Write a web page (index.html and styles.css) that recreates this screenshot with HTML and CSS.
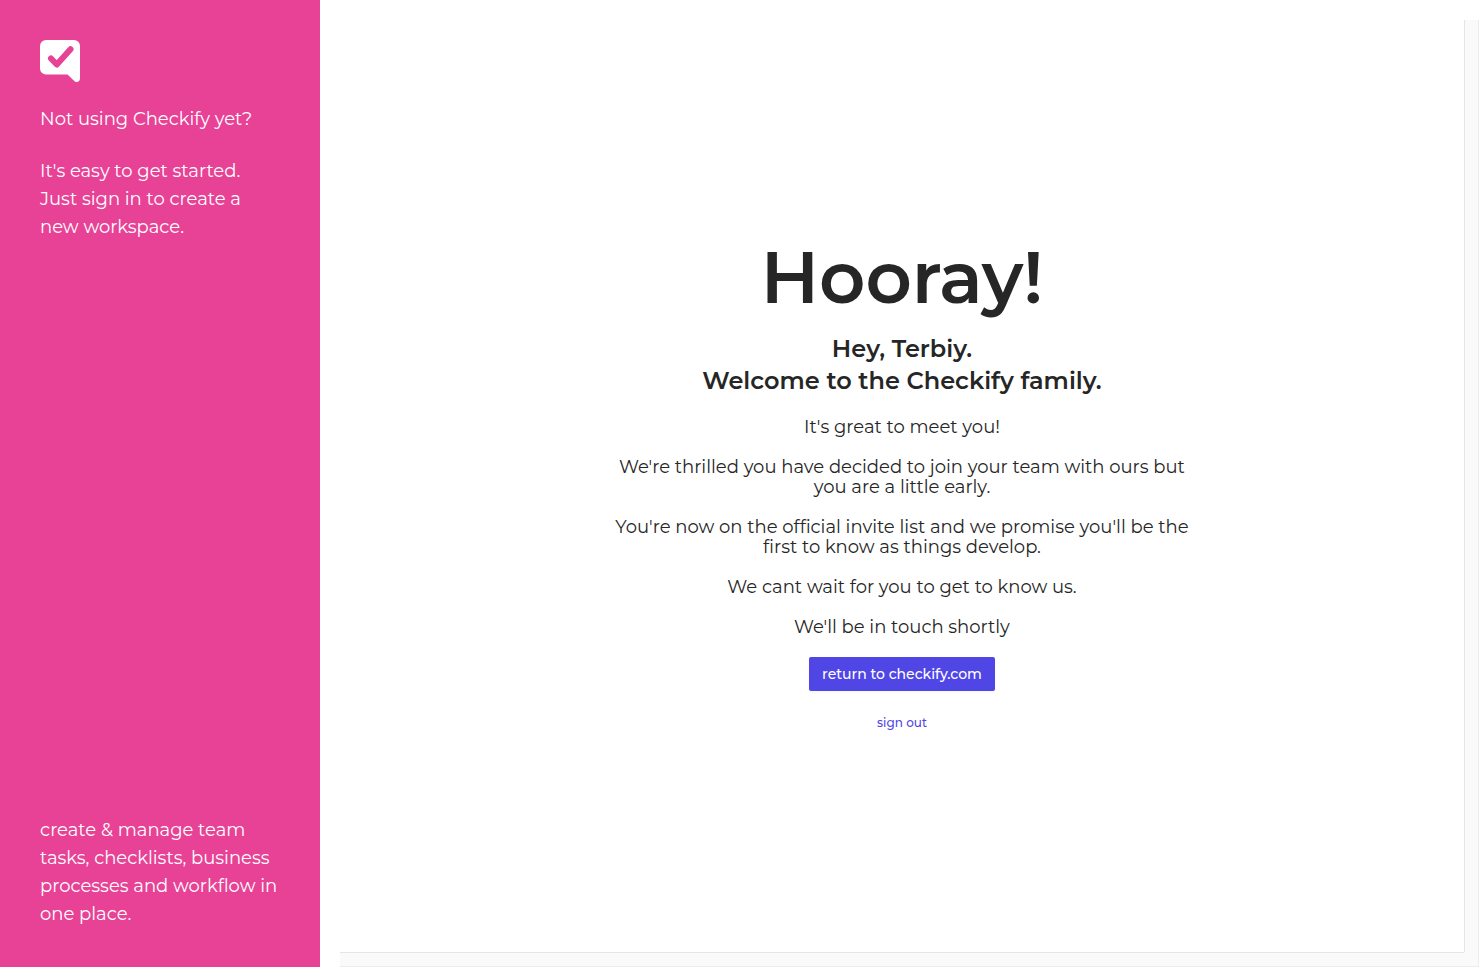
FILE: index.html
```html
<!DOCTYPE html>
<html lang="en">
  <head>
    <meta charset="UTF-8" />
    <meta name="viewport" content="width=device-width, initial-scale=1.0" />
    <title>Checkify</title>
    <link rel="stylesheet" href="styles.css">
  </head>
  <body>
    <aside class="sidebar">
      <svg class="logo" viewBox="0 0 40 42" role="img" aria-label="Checkify">
        <path fill="#fff" d="M6 0H34A6 6 0 0 1 40 6V38.500C40 41.800 36.600 43.200 34.300 41L27.500 34.500H6A6 6 0 0 1 0 28.500V6A6 6 0 0 1 6 0Z" />
        <path fill="none" stroke="#e74296" stroke-width="6" stroke-linecap="round" stroke-linejoin="round" d="M11 18.500L16.800 24.500L30.500 9.300" />
      </svg>
      <div class="intro">
        <p>Not using Checkify yet?</p>
        <p>It's easy to get started.<br>Just sign in to create a<br>new workspace.</p>
      </div>
      <p class="tagline">create &amp; manage team tasks, checklists, business processes and workflow in one place.</p>
    </aside>

    <main class="page">
      <div class="content">
        <div class="welcome">
          <h1>Hooray!</h1>
          <h2>Hey, Terbiy.<br>Welcome to the Checkify family.</h2>
          <p>It's great to meet you!</p>
          <p>We're thrilled you have decided to join your team with ours but you are a little early.</p>
          <p>You're now on the official invite list and we promise you'll be the first to know as things develop.</p>
          <p>We cant wait for you to get to know us.</p>
          <p>We'll be in touch shortly</p>
          <button type="button" class="return">return to checkify.com</button>
          <a href="#" class="sign-out">sign out</a>
        </div>
      </div>
      <div class="track track-right"></div>
      <div class="track track-bottom"></div>
      <div class="corner"></div>
    </main>
  </body>
</html>
```
FILE: styles.css
```css
* {
  box-sizing: border-box;
}
body {
  display: flex;
  min-height: 100vh;
  margin: 0;
  font-family: Montserrat, Inter, sans-serif;
  font-size: 18px;
  color: #262626;
  background-color: #fff;
}
h1, h2, p {
  margin: 0;
}
.sidebar {
  display: flex;
  flex-direction: column;
  flex: 0 0 320px;
  padding: 40px 40px 39px;
  line-height: 28px;
  color: #fff;
  background-color: #e74296;
}
.logo {
  width: 40px;
  height: 42px;
  margin-bottom: 23px;
}
.intro {
  display: flex;
  flex-direction: column;
  gap: 24px;
}
.tagline {
  margin-top: auto;
}
.page {
  display: grid;
  grid-template-columns: 1fr 15px;
  grid-template-rows: 1fr 15px;
  flex: 1;
  margin: 20px 0 0 20px;
}
.content {
  display: flex;
  align-items: center;
  justify-content: center;
}
.welcome {
  display: flex;
  flex-direction: column;
  align-items: center;
  gap: 20px;
  max-width: 600px;
  text-align: center;
  line-height: 20px;
}
h1 {
  font-size: 72px;
  line-height: 72px;
  font-weight: 600;
}
h2 {
  font-size: 24px;
  line-height: 32px;
  font-weight: 600;
}
.return {
  height: 34px;
  padding: 0 13px;
  border: none;
  border-radius: 2px;
  font-family: inherit;
  font-size: 14px;
  font-weight: 500;
  color: #fff;
  background-color: #5046e5;
  box-shadow: 0 2px 2px rgba(0, 0, 0, 0.03);
  cursor: pointer;
}
.sign-out {
  margin-top: 4px;
  font-size: 12px;
  line-height: 16px;
  font-weight: 500;
  color: #5046e5;
  text-decoration: none;
}
/* empty scrollbar tracks around the content */
.track {
  background-color: #fafafa;
}
.track-right {
  border-left: 1px solid #e5e5e5;
  border-right: 1px solid #ececec;
}
.track-bottom {
  border-top: 1px solid #e5e5e5;
  border-bottom: 1px solid #ececec;
}
.corner {
  border-right: 1px solid #ececec;
  border-bottom: 1px solid #ececec;
  background-color: #fafafa;
}
```
